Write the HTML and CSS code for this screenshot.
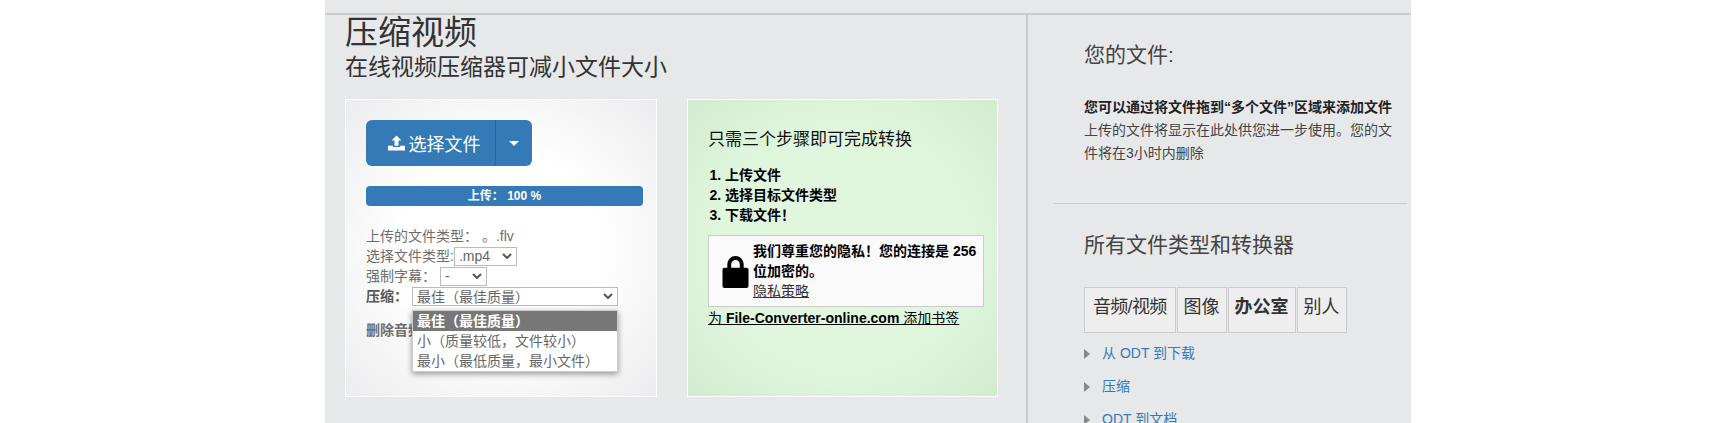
FILE: index.html
```html
<!DOCTYPE html>
<html lang="zh">
<head>
    <meta charset="UTF-8">
    <title>压缩视频</title>
    <link rel="stylesheet" href="styles.css">
</head>
<body>

<div class="page">
    <div class="top-line"></div>
    <div class="columns">

        <div class="main">
            <h1>压缩视频</h1>
            <h2>在线视频压缩器可减小文件大小</h2>

            <div class="boxes">
                <div class="box upload-box">
                    <div class="upload-button">
                        <span class="upload-main">
                            <svg class="upload-icon" viewBox="0 0 18 16"><path d="M9 0l5.200 5.400h-3.100v5.400H6.900V5.400H3.800z"/><path d="M0 11h5.200v1.300h7.600V11H18v5H0z"/></svg>
                            选择文件
                        </span>
                        <span class="upload-caret"><span class="caret"></span></span>
                    </div>

                    <div class="progress">上传： 100 %</div>

                    <div class="form-rows">
                        <div class="form-row">上传的文件类型： 。.flv</div>
                        <div class="form-row">选择文件类型:<span class="select select-type">.mp4<svg class="chevron" viewBox="0 0 10 6"><path d="M1 1l4 4 4-4"/></svg></span></div>
                        <div class="form-row">强制字幕：<span class="select select-sub">-<svg class="chevron" viewBox="0 0 10 6"><path d="M1 1l4 4 4-4"/></svg></span></div>
                        <div class="form-row compress-row">
                            <b class="compress-label">压缩：</b>
                            <span class="select select-compress">最佳（最佳质量）<svg class="chevron" viewBox="0 0 10 6"><path d="M1 1l4 4 4-4"/></svg></span>
                            <ul class="dropdown">
                                <li class="selected">最佳（最佳质量）</li>
                                <li>小（质量较低，文件较小）</li>
                                <li>最小（最低质量，最小文件）</li>
                            </ul>
                        </div>
                        <div class="form-row remove-audio"><b>删除音频</b></div>
                    </div>
                </div>

                <div class="box steps-box">
                    <h3>只需三个步骤即可完成转换</h3>
                    <ol class="steps">
                        <li>上传文件</li>
                        <li>选择目标文件类型</li>
                        <li>下载文件！</li>
                    </ol>
                    <div class="privacy">
                        <svg class="lock" viewBox="0 0 28 35"><path d="M5.500 16V10.500a8.500 8.500 0 0 1 17 0V16h-4V10.500a4.500 4.500 0 0 0-9 0V16z" fill="#000"/><rect x="0.500" y="14" width="27" height="21" rx="2" fill="#000"/></svg>
                        <div class="privacy-text">
                            <b>我们尊重您的隐私！您的连接是 256 位加密的。</b>
                            <a href="#">隐私策略</a>
                        </div>
                    </div>
                    <a class="bookmark" href="#">为 <b>File-Converter-online.com</b> 添加书签</a>
                </div>
            </div>
        </div>

        <div class="side">
            <div class="side-files">
                <h4>您的文件:</h4>
                <p><b>您可以通过将文件拖到“多个文件”区域来添加文件</b><br>上传的文件将显示在此处供您进一步使用。您的文件将在3小时内删除</p>
            </div>
            <div class="side-types">
                <h4>所有文件类型和转换器</h4>
                <div class="tabs">
                    <span class="tab tab-wide">音频/视频</span>
                    <span class="tab">图像</span>
                    <span class="tab active">办公室</span>
                    <span class="tab">别人</span>
                </div>
                <ul class="links">
                    <li><a href="#">从 ODT 到下载</a></li>
                    <li><a href="#">压缩</a></li>
                    <li><a href="#">ODT 到文档</a></li>
                </ul>
            </div>
        </div>

    </div>
</div>

</body>
</html>
```

FILE: styles.css
```css
html, body {
    height: 100%;
    overflow: hidden;
}

body {
    margin: 0;
    background-color: #fff;
    color: #555;
    font-family: "Liberation Sans", "Noto Sans CJK SC", sans-serif;
    font-size: 14px;
}

.page {
    width: 1086px;
    height: 100%;
    margin-left: 325px;
    padding-top: 13px;
    box-sizing: border-box;
    background-color: #e7e8ea;
}

.top-line {
    height: 2px;
    background-color: #ccc;
}

.columns {
    display: flex;
    height: 100%;
}

/* Left part */
.main {
    width: 703px;
    padding-left: 20px;
    box-sizing: border-box;
    border-right: 2px solid #ccc;
}

h1 {
    margin: 0;
    font-size: 33px;
    font-weight: normal;
    line-height: 36px;
    color: #333;
}

h2 {
    margin: 0 0 16px;
    font-size: 23px;
    font-weight: normal;
    line-height: 32px;
    color: #333;
}

.boxes {
    display: flex;
    gap: 30px;
}

.box {
    width: 312px;
    height: 298px;
    box-sizing: border-box;
    border: 1px solid #fff;
}

.upload-box {
    padding: 20px;
    background: radial-gradient(ellipse at center, #fff 45%, #ececee 100%);
}

.upload-button {
    display: flex;
    width: 166px;
    height: 46px;
    border-radius: 6px;
    background-color: #337ab7;
    color: #fff;
    font-size: 18px;
}

.upload-main {
    display: flex;
    align-items: center;
    justify-content: center;
    gap: 4px;
    width: 130px;
    padding-left: 7px;
    box-sizing: border-box;
    border-right: 1px solid #2a6496;
}

.upload-icon {
    width: 17px;
    height: 16px;
    fill: #fff;
}

.upload-caret {
    flex: 1;
    display: flex;
    align-items: center;
    justify-content: center;
}

.caret {
    border-top: 5px solid #fff;
    border-left: 5px solid transparent;
    border-right: 5px solid transparent;
}

.progress {
    width: 277px;
    height: 20px;
    margin-top: 20px;
    border-radius: 4px;
    background-color: #337ab7;
    color: #fff;
    font-size: 12px;
    font-weight: bold;
    line-height: 20px;
    text-align: center;
}

.form-rows {
    margin-top: 19px;
}

.form-row {
    display: flex;
    align-items: center;
    height: 20px;
    color: #6e6e6e;
}

.compress-row {
    position: relative;
}

.compress-label {
    width: 46px;
    color: #555;
}

.select {
    display: flex;
    align-items: center;
    justify-content: space-between;
    height: 19px;
    margin-top: 2px;
    padding: 0 4px;
    box-sizing: border-box;
    border: 1px solid #bbb;
    background-color: #fff;
    color: #666;
}

.select-type {
    width: 63px;
}

.select-sub {
    width: 47px;
    margin-left: 4px;
}

.select-compress {
    width: 206px;
}

.chevron {
    width: 10px;
    height: 6px;
    fill: none;
    stroke: #555;
    stroke-width: 2;
}

.dropdown {
    position: absolute;
    top: 25px;
    left: 46px;
    width: 206px;
    margin: 0;
    padding: 0;
    box-sizing: border-box;
    list-style: none;
    border: 1px solid #ccc;
    background-color: #fff;
    box-shadow: 0 2px 6px rgba(0, 0, 0, 0.4);
}

.dropdown li {
    height: 20px;
    padding-left: 4px;
    line-height: 20px;
    color: #666;
}

.dropdown li.selected {
    background-color: #777;
    color: #fff;
    font-weight: bold;
}

.remove-audio {
    margin-top: 14px;
}

/* Green box */
.steps-box {
    width: 311px;
    padding: 28px 20px 0;
    background: radial-gradient(ellipse at center, #e0f7de 55%, #d2ebcf 100%);
    color: #000;
}

h3 {
    margin: 0 0 13px;
    font-size: 17px;
    font-weight: normal;
    line-height: 24px;
    color: #111;
}

.steps {
    margin: 0 0 10px;
    padding-left: 17px;
    font-weight: bold;
    line-height: 20px;
}

.privacy {
    display: flex;
    align-items: center;
    gap: 4px;
    width: 276px;
    height: 72px;
    padding-left: 13px;
    box-sizing: border-box;
    border: 1px solid #ccc;
    background-color: #fafafa;
}

.lock {
    flex: none;
    width: 27px;
    height: 34px;
}

.privacy-text {
    line-height: 20px;
    color: #000;
}

.privacy-text a {
    display: block;
    color: #333;
}

.bookmark {
    display: block;
    margin-top: 1px;
    line-height: 20px;
    color: #000;
}

/* Sidebar */
.side {
    flex: 1;
}

.side-files {
    margin: 0 4px 0 26px;
    padding: 20px 0 38px 30px;
    border-bottom: 1px solid #ccc;
    color: #444;
}

h4 {
    margin: 0;
    font-size: 21px;
    font-weight: normal;
    line-height: 40px;
    color: #444;
}

.side-files p {
    margin: 21px 0 0;
    width: 310px;
    line-height: 23px;
}

.side-files b {
    color: #222;
}

.side-types {
    padding: 21px 0 0 56px;
}

.tabs {
    display: flex;
    gap: 1px;
    margin-top: 22px;
}

.tab {
    height: 46px;
    padding: 0 6px;
    box-sizing: border-box;
    border: 1px solid #ccc;
    background-color: #eee;
    color: #333;
    font-size: 18px;
    line-height: 38px;
}

.tab-wide {
    padding: 0 8px;
    letter-spacing: -0.7px;
}

.tab.active {
    font-weight: bold;
}

.links {
    margin: 4px 0 0;
    padding: 0;
    list-style: none;
}

.links li {
    position: relative;
    height: 33px;
    padding-left: 18px;
    line-height: 33px;
}

.links li::before {
    content: "";
    position: absolute;
    left: 0;
    top: 12px;
    border-left: 6px solid #888;
    border-top: 5px solid transparent;
    border-bottom: 5px solid transparent;
}

.links a {
    color: #337ab7;
    text-decoration: none;
}
```
